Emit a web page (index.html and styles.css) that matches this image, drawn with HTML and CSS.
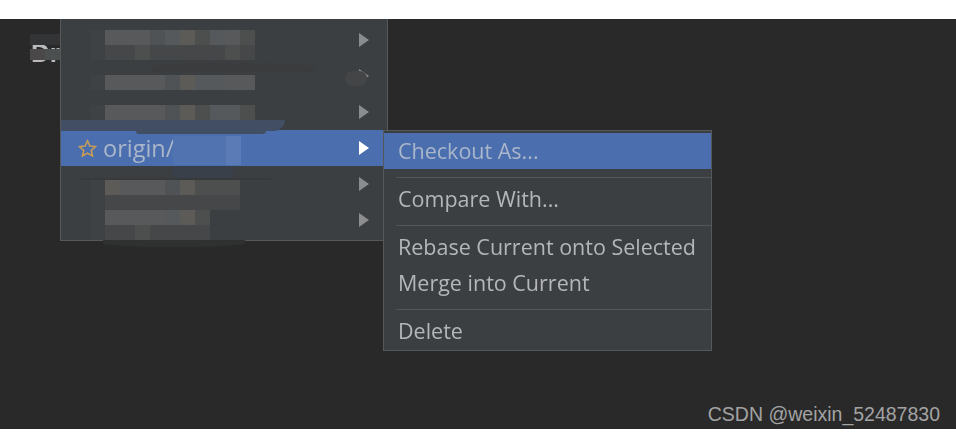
FILE: index.html
```html
<!DOCTYPE html>
<html lang="en">
<head>
    <meta charset="UTF-8">
    <meta name="viewport" content="width=device-width, initial-scale=1.0">
    <title>Branch menu</title>
    <link rel="stylesheet" href="styles.css">
</head>
<body>
    <div class="editor">
        <span class="tab-label">Dr</span>
        <span class="hide hide-label-a"></span>
        <span class="hide hide-label-b"></span>
        <span class="hide hide-label-c"></span>

        <div class="menu branches">
            <div class="item"><span class="arrow"></span></div>
            <div class="item"><span class="arrow"></span></div>
            <div class="item"><span class="arrow"></span></div>
            <div class="item selected">
                <svg class="star" viewBox="0 0 16 16" width="19" height="19">
                    <path d="M8 1.5l2 4.4 4.7.5-3.5 3.2 1 4.7L8 11.9l-4.200 2.400 1-4.700L1.300 6.400 6 5.900z" fill="none" stroke="#c99e55" stroke-width="1.300"/>
                </svg>
                <span class="label">origin/</span>
                <span class="arrow"></span>
            </div>
            <div class="item"><span class="arrow"></span></div>
            <div class="item"><span class="arrow"></span></div>

            <!-- pixelated bits covering the branch names -->
            <div class="mosaic m1">
                <span class="d2"></span><span class="l3"></span><span class="l3"></span><span class="l3"></span><span class="l2"></span><span class="l4"></span><span class="l5"></span><span class="l1"></span><span class="l4"></span><span class="l3"></span><span class="l1"></span>
            </div>
            <div class="mosaic m2">
                <span class="d2"></span><span class="d1"></span><span class="d1"></span><span class="l1"></span><span class="d1"></span><span class="d1"></span><span class="d1"></span><span class="d1"></span><span class="d1"></span><span class="l1"></span><span class="d1"></span>
            </div>
            <div class="mosaic m3">
                <span class="d2"></span><span class="l3"></span><span class="l3"></span><span class="l3"></span><span class="l3"></span><span class="l2"></span><span class="l5"></span><span class="l4"></span><span class="l4"></span><span class="l3"></span><span class="l3"></span>
            </div>
            <div class="mosaic m4">
                <span class="d2"></span><span class="l3"></span><span class="l3"></span><span class="l3"></span><span class="l3"></span><span class="l2"></span><span class="l5"></span><span class="l1"></span><span class="l4"></span><span class="l4"></span><span class="l1"></span>
            </div>
            <div class="mosaic m5">
                <span class="d2"></span><span class="l5"></span><span class="l3"></span><span class="l3"></span><span class="l3"></span><span class="l2"></span><span class="l5"></span><span class="l1"></span><span class="l1"></span><span class="l1"></span>
            </div>
            <div class="mosaic m6">
                <span class="d2"></span><span class="d1"></span><span class="d1"></span><span class="d1"></span><span class="d1"></span><span class="d1"></span><span class="d1"></span><span class="d1"></span><span class="d1"></span><span class="d1"></span>
            </div>
            <div class="mosaic m7">
                <span class="d2"></span><span class="l3"></span><span class="l3"></span><span class="l3"></span><span class="l3"></span><span class="l4"></span><span class="l5"></span><span class="l1"></span>
            </div>
            <div class="mosaic m8">
                <span class="d2"></span><span class="d1"></span><span class="d1"></span><span class="l1"></span><span class="d1"></span><span class="d1"></span><span class="d1"></span><span class="d1"></span>
            </div>
            <span class="hide hide-wave"></span>
            <span class="hide hide-blob"></span>
            <span class="hide hide-blue"></span>
            <span class="hide hide-blue-edge"></span>
            <span class="hide hide-selected"></span>
            <span class="hide hide-selected-light"></span>
            <span class="hide hide-dark"></span>
            <span class="hide hide-line"></span>
            <span class="hide hide-bottom"></span>
        </div>

        <div class="menu actions">
            <div class="item selected">Checkout As...</div>
            <div class="sep"></div>
            <div class="item">Compare With...</div>
            <div class="sep"></div>
            <div class="item">Rebase Current onto Selected</div>
            <div class="item">Merge into Current</div>
            <div class="sep"></div>
            <div class="item">Delete</div>
        </div>

        <div class="watermark">CSDN @weixin_52487830</div>
    </div>
</body>
</html>
```

FILE: styles.css
```css
html, body { margin: 0; padding: 0; }
body { background: white; font-family: "Open Sans", sans-serif; padding-top: 19px; height: 416px; overflow: hidden; }

.editor { position: relative; height: 410px; background: #292929; }
.tab-label { position: absolute; left: 31px; top: 21px; font: bold 26px/26px "Liberation Sans", sans-serif; color: #bbbbbb; filter: blur(0.5px); }
.watermark { position: absolute; right: 16px; bottom: 3px; font: 19.500px "Liberation Sans", sans-serif; color: #a3a3a3; }

.menu { position: absolute; box-sizing: border-box; background: #3c3f41; border: 1px solid #55585a; }
.branches { left: 60px; top: 0; width: 328px; height: 222px; padding-top: 3px; border-top: none; }
.actions { left: 383px; top: 111px; width: 329px; height: 221px; padding-top: 2px; }

.item { display: flex; align-items: center; box-sizing: border-box; height: 36px; padding-left: 14px; padding-bottom: 2px; font-size: 21.500px; color: #b4b6b8; filter: blur(0.3px); }
.branches .item { padding-left: 17px; padding-right: 18px; padding-bottom: 0; }
.selected { background: #4b6eaf; color: #aab6ca; }
.sep { height: 12px; margin-left: 12px; position: relative; }
.sep::after { content: ""; position: absolute; left: 0; right: 0; top: 8px; height: 1px; background: #54575a; }

.star { margin-right: 6px; }
.label { font-size: 23.500px; }
.arrow { margin-left: auto; width: 0; height: 0; border-left: 10px solid #8b8d8e; border-top: 7px solid transparent; border-bottom: 7px solid transparent; }
.selected .arrow { border-left-color: #ffffff; }

/* redacted parts */
.hide { position: absolute; display: block; }
.hide-label-a { left: 30px; top: 15px; width: 30px; height: 11px; background: #333435; }
.hide-label-b { left: 30px; top: 30px; width: 15px; height: 11px; background: #4a4848; }
.hide-label-c { left: 45px; top: 30px; width: 15px; height: 11px; background: #4b4f50; }
.hide-wave { left: 90px; top: 44px; width: 165px; height: 9px; background: #3a3c3e; border-radius: 50% 50% 0 0; }
.hide-blob { left: 284px; top: 52px; width: 22px; height: 15px; background: #434547; border-radius: 8px; }
.hide-blue { left: 0; top: 101px; width: 224px; height: 11px; background: #414e63; border-bottom-right-radius: 14px; }
.hide-blue-edge { left: 75px; top: 112px; width: 130px; height: 3px; background: #414e63; border-radius: 0 0 8px 8px; }
.hide-selected { left: 112px; top: 117px; width: 53px; height: 29px; background: #5174b0; }
.hide-selected-light { left: 165px; top: 117px; width: 15px; height: 29px; background: #5a7bb5; }
.hide-dark { left: 112px; top: 147px; width: 60px; height: 14px; background: #3a404a; }
.hide-line { left: 20px; top: 159px; width: 190px; height: 2px; background: #37393b; }
.hide-bottom { left: 42px; top: 221px; width: 142px; height: 7px; background: #2f3030; border-radius: 0 0 50% 50%; }

.mosaic { position: absolute; left: 29px; display: flex; height: 15px; }
.mosaic span { width: 15px; }
.m1 { top: 11px; }
.m2 { top: 26px; }
.m3 { top: 56px; }
.m4 { top: 86px; }
.m5 { top: 161px; }
.m6 { top: 176px; }
.m7 { top: 191px; }
.m8 { top: 206px; }
.d1 { background: #454748; }
.d2 { background: #3e4244; }
.l1 { background: #4d4e4e; }
.l2 { background: #4f5355; }
.l3 { background: #58595a; }
.l4 { background: #55595b; }
.l5 { background: #5d5b58; }
```
